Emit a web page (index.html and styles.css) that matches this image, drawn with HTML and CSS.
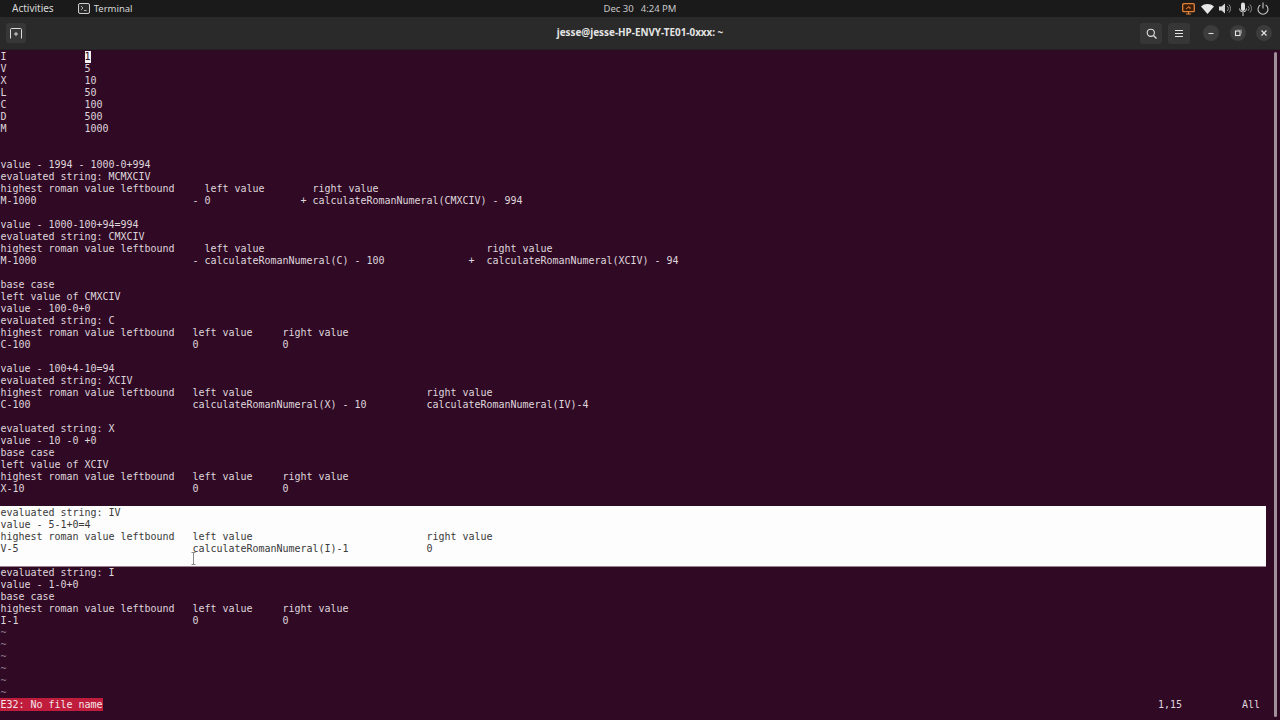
FILE: index.html
```html
<!DOCTYPE html>
<html lang="en">
<head>
<meta charset="utf-8">
<title>Terminal</title>
<link rel="stylesheet" href="styles.css">
</head>
<body>
<div class="screen">
  <header class="panel">
    <div class="panel-left">
      <span class="panel-item">Activities</span>
      <span class="panel-app">
        <svg class="app-icon" width="12" height="11" viewBox="0 0 12 11"><rect x="0.5" y="0.5" width="11" height="10" rx="1.5" fill="#2b2b2b" stroke="#cfcfcf"/><path d="M3 3l2 2-2 2M6 7.500h2.500" fill="none" stroke="#cfcfcf" stroke-width="0.8"/></svg>
        <span class="panel-item app-name">Terminal</span>
      </span>
    </div>
    <div class="clock"><span>Dec 30</span><span>4:24 PM</span></div>
    <div class="tray">
      <svg width="13" height="12" viewBox="0 0 13 12"><rect x="0.7" y="0.700" width="11.600" height="8" rx="1" fill="#3a1c08" stroke="#e0813a" stroke-width="1.300"/><path d="M4 11h5M6.500 9v2" stroke="#e0813a" stroke-width="1.200"/><path d="M4 6l3-2.500v1.500h2" fill="none" stroke="#e0813a"/></svg>
      <svg width="13" height="10" viewBox="0 0 13 10"><path d="M0 2.500C3.500-.8 9.500-.8 13 2.500L6.500 10z" fill="#e8e8e8"/></svg>
      <svg width="13" height="11" viewBox="0 0 13 11"><path d="M0 3.500h2.500L6 .5v10L2.500 7.500H0z" fill="#d8d8d8"/><path d="M8 3a3 3 0 0 1 0 5M10 1.500a6 6 0 0 1 0 8" fill="none" stroke="#8d8d8d"/></svg>
      <svg width="14" height="14" viewBox="0 0 14 14"><rect x="3" y="0.500" width="4" height="8.500" rx="2" fill="#e0e0e0"/><path d="M1.500 6.500a3.500 3.500 0 0 0 7 0M5 10.500V14" fill="none" stroke="#c8c8c8"/><path d="M10 4a3.500 3.500 0 0 1 0 5M12 2.500a6 6 0 0 1 0 8" fill="none" stroke="#888"/></svg>
      <svg width="12" height="13" viewBox="0 0 12 13"><path d="M3.300 3a5 5 0 1 0 5.400 0M6 .5v6" fill="none" stroke="#c4c4c4" stroke-width="1.100"/></svg>
    </div>
  </header>

  <div class="titlebar">
    <div class="title-left">
      <span class="tool-btn">
        <svg width="12" height="11" viewBox="0 0 12 11"><path d="M0.500 10.500V1.500a1 1 0 0 1 1-1h9a1 1 0 0 1 1 1v9M4 6h4M6 4v4" fill="none" stroke="#dcdcdc"/></svg>
      </span>
    </div>
    <div class="title-text">jesse@jesse-HP-ENVY-TE01-0xxx: ~</div>
    <div class="title-right">
      <span class="tool-btn small">
        <svg width="11" height="11" viewBox="0 0 11 11"><circle cx="4.800" cy="4.800" r="3.600" fill="none" stroke="#e2e2e2" stroke-width="1.100"/><path d="M7.500 7.500l3 3" stroke="#e2e2e2" stroke-width="1.200"/></svg>
      </span>
      <span class="tool-btn small">
        <svg width="10" height="9" viewBox="0 0 10 9"><path d="M1 1.500h8M1 4.500h8M1 7.500h8" stroke="#e2e2e2" stroke-width="1.100"/></svg>
      </span>
      <span class="win-btns">
        <span class="win-btn"><svg width="8" height="8" viewBox="0 0 8 8"><path d="M1.500 4.500h5" stroke="#dcdcdc" stroke-width="1.100"/></svg></span>
        <span class="win-btn"><svg width="8" height="8" viewBox="0 0 8 8"><rect x="1.500" y="2" width="4.500" height="4.500" fill="none" stroke="#e4e4e4" stroke-width="1.100"/><path d="M3 1h4.500v4" fill="none" stroke="#9a9a9a" stroke-width="0.700"/></svg></span>
        <span class="win-btn"><svg width="8" height="8" viewBox="0 0 8 8"><path d="M1.500 1.500l5 5M6.500 1.500l-5 5" stroke="#e4e4e4" stroke-width="1.200"/></svg></span>
      </span>
    </div>
  </div>

  <main class="terminal">
    <div class="buffer">
<div class="line">I             <span class="cursor">1</span></div>
<div class="line">V             5</div>
<div class="line">X             10</div>
<div class="line">L             50</div>
<div class="line">C             100</div>
<div class="line">D             500</div>
<div class="line">M             1000</div>
<div class="line"> </div>
<div class="line"> </div>
<div class="line">value - 1994 - 1000-0+994</div>
<div class="line">evaluated string: MCMXCIV</div>
<div class="line">highest roman value leftbound     left value        right value</div>
<div class="line">M-1000                          - 0               + calculateRomanNumeral(CMXCIV) - 994</div>
<div class="line"> </div>
<div class="line">value - 1000-100+94=994</div>
<div class="line">evaluated string: CMXCIV</div>
<div class="line">highest roman value leftbound     left value                                     right value</div>
<div class="line">M-1000                          - calculateRomanNumeral(C) - 100              +  calculateRomanNumeral(XCIV) - 94</div>
<div class="line"> </div>
<div class="line">base case</div>
<div class="line">left value of CMXCIV</div>
<div class="line">value - 100-0+0</div>
<div class="line">evaluated string: C</div>
<div class="line">highest roman value leftbound   left value     right value</div>
<div class="line">C-100                           0              0</div>
<div class="line"> </div>
<div class="line">value - 100+4-10=94</div>
<div class="line">evaluated string: XCIV</div>
<div class="line">highest roman value leftbound   left value                             right value</div>
<div class="line">C-100                           calculateRomanNumeral(X) - 10          calculateRomanNumeral(IV)-4</div>
<div class="line"> </div>
<div class="line">evaluated string: X</div>
<div class="line">value - 10 -0 +0</div>
<div class="line">base case</div>
<div class="line">left value of XCIV</div>
<div class="line">highest roman value leftbound   left value     right value</div>
<div class="line">X-10                            0              0</div>
<div class="line"> </div>
<div class="selection">
<div class="line">evaluated string: IV</div>
<div class="line">value - 5-1+0=4</div>
<div class="line">highest roman value leftbound   left value                             right value</div>
<div class="line">V-5                             calculateRomanNumeral(I)-1             0</div>
<div class="line"> </div>
</div>
<div class="line">evaluated string: I</div>
<div class="line">value - 1-0+0</div>
<div class="line">base case</div>
<div class="line">highest roman value leftbound   left value     right value</div>
<div class="line">I-1                             0              0</div>
<div class="line tilde">~</div>
<div class="line tilde">~</div>
<div class="line tilde">~</div>
<div class="line tilde">~</div>
<div class="line tilde">~</div>
<div class="line tilde">~</div>
<div class="status">
  <span class="error">E32: No file name</span>
  <span class="status-right"><span class="pos">1,15</span><span>All</span></span>
</div>
    </div>
    <div class="scroll-track"><div class="scroll-thumb"></div></div>
    <svg class="ibeam" width="5" height="13" viewBox="0 0 5 13"><path d="M0.500 0.500h4M2.500 0.500v12M0.500 12.500h4" fill="none" stroke="#8a8a8a"/></svg>
  </main>
</div>
</body>
</html>
```
FILE: styles.css
```css
* { box-sizing: border-box; }
html, body { margin: 0; padding: 0; }
body { width: 1280px; height: 720px; overflow: hidden; background: #300a24; }
.screen { width: 1280px; height: 720px; display: flex; flex-direction: column; }

.panel {
  height: 17px; flex: none; background: #1a1a1a; color: #d8d8d8;
  display: grid; grid-template-columns: 1fr auto 1fr; align-items: center;
  font: 10px/17px "Noto Sans", "Open Sans", sans-serif;
}
.panel-left { display: flex; align-items: center; padding-left: 12px; }
.panel-item { white-space: nowrap; }
.app-name { font-size: 9.500px; }
.panel-app { display: flex; align-items: center; gap: 4px; margin-left: 24px; }
.clock { display: flex; gap: 7px; color: #c8c8c8; font-size: 9.500px; }
.tray { display: flex; align-items: center; justify-content: flex-end; gap: 5.500px; padding-right: 11px; }
.tray svg { display: block; }

.titlebar {
  height: 33px; flex: none; background: #2a2a2a; border-bottom: 1px solid #232323;
  display: grid; grid-template-columns: 1fr auto 1fr; align-items: center;
}
.title-left { padding-left: 6px; display: flex; }
.title-text { font: 700 9.900px/1 "Noto Sans", "Open Sans", sans-serif; color: #e4e4e4; white-space: nowrap; }
.title-right { display: flex; justify-content: flex-end; align-items: center; padding-right: 8px; gap: 6px; }
.tool-btn {
  width: 20px; height: 20px; border-radius: 3px; background: #373737;
  display: flex; align-items: center; justify-content: center;
}
.tool-btn.small { width: 22px; height: 21px; background: #363636; }
.win-btns { display: flex; gap: 10.500px; margin-left: 7px; }
.win-btn {
  width: 16px; height: 16px; border-radius: 50%; background: #3c3c3c;
  display: flex; align-items: center; justify-content: center;
}
.tool-btn svg, .win-btn svg { display: block; }

.terminal { position: relative; flex: 1; min-height: 0; display: flex; background: #300a24; }
.buffer { width: 1266px; flex: none; font: 10px/12px "DejaVu Sans Mono", monospace; letter-spacing: -0.020px; color: #dfd5dc; }
.line { height: 12px; white-space: pre; padding: 1px 0 0 0.500px; }
.cursor { background: #f2f2f2; color: #300a24; display: inline-block; }
.selection { background: #fdfdfd; color: #3a3a3a; box-shadow: 0 1px 0 #9a8292; }
.tilde { color: #8f7a89; }
.status { height: 12px; display: flex; justify-content: space-between; white-space: pre; line-height: 14px; }
.error { background: #c01c3c; color: #f3e6ea; padding-left: 0.500px; box-shadow: 0 1px 0 #c01c3c; }
.status-right { display: flex; padding-right: 6px; }
.pos { margin-right: 60px; }

.scroll-track { flex: 1; display: flex; justify-content: flex-end; padding: 2px 3px 3px 0; }
.scroll-thumb { width: 3px; background: #a18f9c; border-radius: 2px; }
.ibeam { position: absolute; left: 191px; top: 502px; }
```
